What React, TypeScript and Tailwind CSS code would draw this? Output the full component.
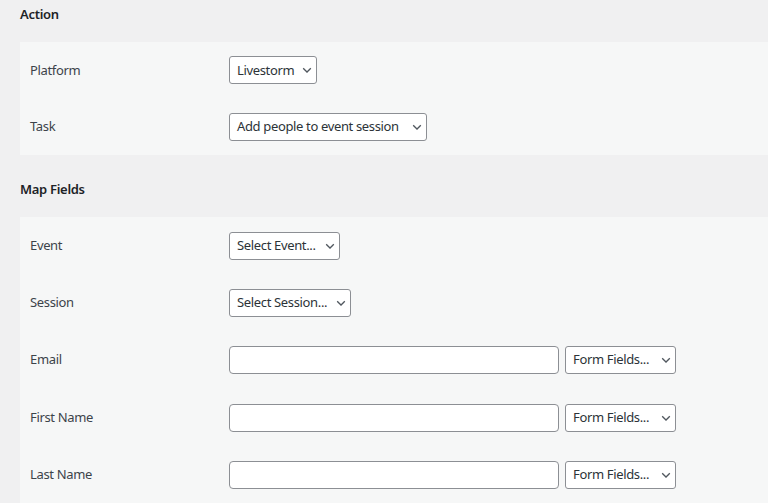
import React from "react";

const Chevron = () => (
  <svg width="10" height="10" viewBox="0 0 10 10" className="shrink-0">
    <path d="M1.2 3.3 L5 7 L8.8 3.3" fill="none" stroke="#50575e" strokeWidth="1.3" />
  </svg>
);

const Select = ({ text, w }: { text: string; w: string }) => (
  <div
    className={`${w} h-[28px] flex items-center justify-between pl-[7px] pr-[4px] bg-white border border-[#8c8f94] rounded-[3px] text-[13px] tracking-[-0.35px] text-[#2c3338] whitespace-nowrap`}
  >
    <span>{text}</span>
    <Chevron />
  </div>
);

const Row = ({ label, h, children }: { label: string; h: string; children: React.ReactNode }) => (
  <div className={`${h} flex items-center`}>
    <div className="w-[209px] pl-[10px] text-[13px] tracking-[-0.35px] text-[#3c434a]">{label}</div>
    <div className="flex items-center gap-[6px]">{children}</div>
  </div>
);

const Input = () => (
  <div className="w-[330px] h-[28px] bg-white border border-[#8c8f94] rounded-[4px]" />
);

export default function App() {
  const h1 = "h-[56.5px]";
  const h2 = "h-[57.3px]";
  return (
    <div
      className="w-[768px] h-[503px] overflow-hidden bg-[#f0f0f1] pl-[20px]"
      style={{ fontFamily: '"Noto Sans", "Open Sans", sans-serif' }}
    >
      <div className="pt-[4px] h-[42px] text-[13px] leading-[20px] tracking-[-0.3px] font-semibold text-[#1d2327]">Action</div>
      <div className="bg-[#f6f7f7]">
        <Row label="Platform" h={h1}>
          <Select text="Livestorm" w="w-[88px]" />
        </Row>
        <Row label="Task" h={h1}>
          <Select text="Add people to event session" w="w-[198px]" />
        </Row>
      </div>
      <div className="pt-[24px] h-[62px] text-[13px] leading-[20px] tracking-[-0.3px] font-semibold text-[#1d2327]">Map Fields</div>
      <div className="bg-[#f6f7f7]">
        <Row label="Event" h={h2}>
          <Select text="Select Event..." w="w-[111px]" />
        </Row>
        <Row label="Session" h={h2}>
          <Select text="Select Session..." w="w-[122px]" />
        </Row>
        <Row label="Email" h={h2}>
          <Input />
          <Select text="Form Fields..." w="w-[111px]" />
        </Row>
        <Row label="First Name" h={h2}>
          <Input />
          <Select text="Form Fields..." w="w-[111px]" />
        </Row>
        <Row label="Last Name" h={h2}>
          <Input />
          <Select text="Form Fields..." w="w-[111px]" />
        </Row>
      </div>
    </div>
  );
}
